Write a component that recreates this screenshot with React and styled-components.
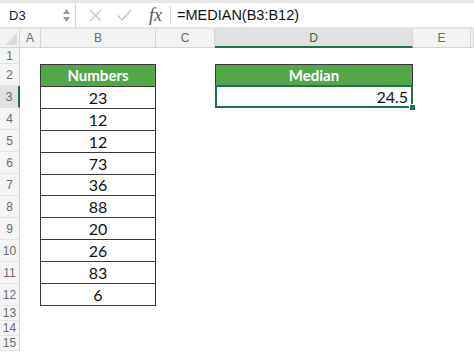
import React from "react";
import styled, { createGlobalStyle } from "styled-components";

const GlobalStyle = createGlobalStyle`
  body {
    margin: 0;
    background: #ffffff;
    font-family: "Liberation Sans", Arial, sans-serif;
  }
`;

const Page = styled.div`
  width: 474px;
  height: 353px;
  overflow: hidden;
  background: #ffffff;
  display: flex;
  flex-direction: column;
`;

const FormulaBar = styled.div`
  display: flex;
  align-items: stretch;
  height: 24px;
  border-top: 3px solid #e6e6e6;
  border-bottom: 2px solid #e6e6e6;
  background: #ffffff;
`;

const NameBox = styled.div`
  width: 76px;
  display: flex;
  align-items: center;
  justify-content: space-between;
  padding: 0 5px 0 9px;
  box-sizing: border-box;
  border-right: 1px solid #d6d6d6;
  font-size: 13px;
  color: #222;
`;

const Spinner = styled.div`
  display: flex;
  flex-direction: column;
  gap: 3px;
  color: #9a9a9a;
`;

const IconGroup = styled.div`
  display: flex;
  align-items: center;
  gap: 15px;
  padding: 0 0 0 13px;
  color: #c4c4c4;
`;

const Fx = styled.span`
  font-family: "Liberation Serif", "Times New Roman", serif;
  font-style: italic;
  font-size: 18px;
  color: #555;
  padding: 0 8px 0 2px;
  border-right: 1px solid #d6d6d6;
  line-height: 18px;
`;

const FormulaText = styled.div`
  display: flex;
  align-items: center;
  padding-left: 6px;
  font-size: 14.5px;
  color: #111;
`;

const Sheet = styled.div`
  display: grid;
  grid-template-columns: 20px 21px 115px 59px 198px 58px 1fr;
  grid-template-rows: 19px 16px repeat(11, 22px) repeat(3, 15px) 1fr;
  flex: 1;
`;

const Corner = styled.div`
  grid-row: 1;
  grid-column: 1;
  background: #f2f2f2;
  border-right: 1px solid #d4d4d4;
  border-bottom: 1px solid #d4d4d4;
  position: relative;
  &::after {
    content: "";
    position: absolute;
    right: 2px;
    bottom: 2px;
    border-left: 12px solid transparent;
    border-bottom: 12px solid #dcdcdc;
  }
`;

const ColHead = styled.div`
  grid-row: 1;
  display: flex;
  align-items: center;
  justify-content: center;
  font-size: 12px;
  color: ${(p) => (p.$active ? "#2f6b45" : "#6b6b6b")};
  background: ${(p) => (p.$active ? "#e1e1e1" : "#f2f2f2")};
  border-right: 1px solid #d4d4d4;
  border-bottom: ${(p) => (p.$active ? "2px solid #217346" : "1px solid #d4d4d4")};
`;

const RowHead = styled.div`
  grid-column: 1;
  display: flex;
  align-items: center;
  justify-content: center;
  font-size: 12px;
  color: #6b6b6b;
  background: ${(p) => (p.$active ? "#e1e1e1" : "#f4f4f4")};
  border-right: ${(p) => (p.$active ? "2px solid #217346" : "1px solid #d4d4d4")};
  border-bottom: 1px solid #e2e2e2;
`;

const DataTable = styled.div`
  grid-column: 3;
  grid-row: 3 / span 11;
  display: flex;
  flex-direction: column;
  border: 1px solid #3a3a3a;
  margin-left: -1px;
  font-family: Lato, "Open Sans", sans-serif;
`;

const HeadCell = styled.div`
  flex: 1;
  display: flex;
  align-items: center;
  justify-content: center;
  background: #52a849;
  color: #ffffff;
  font-weight: 700;
  font-size: 15px;
  border-bottom: 1px solid #3a3a3a;
`;

const ValueCell = styled.div`
  flex: 1;
  display: flex;
  align-items: center;
  justify-content: center;
  font-size: 16px;
  color: #111;
  border-bottom: 1px solid #3a3a3a;
  &:last-child {
    border-bottom: none;
  }
`;

const MedianBlock = styled.div`
  grid-column: 5;
  grid-row: 3 / span 2;
  display: flex;
  flex-direction: column;
  font-family: Lato, "Open Sans", sans-serif;
`;

const MedianHead = styled(HeadCell)`
  border: 1px solid #3a3a3a;
  border-bottom: none;
`;

const SelectedCell = styled.div`
  flex: 1;
  position: relative;
  display: flex;
  align-items: center;
  justify-content: flex-end;
  padding-right: 3px;
  font-size: 16px;
  color: #111;
  border: 2px solid #217346;
  &::after {
    content: "";
    position: absolute;
    right: -5px;
    bottom: -5px;
    width: 5px;
    height: 5px;
    background: #217346;
    border: 1px solid #ffffff;
  }
`;

const cols = [
  { label: "A", col: 2 },
  { label: "B", col: 3 },
  { label: "C", col: 4 },
  { label: "D", col: 5, active: true },
  { label: "E", col: 6 },
  { label: "", col: 7 },
];

const numbers = [23, 12, 12, 73, 36, 88, 20, 26, 83, 6];

export default function App() {
  return (
    <Page>
      <GlobalStyle />
      <FormulaBar>
        <NameBox>
          D3
          <Spinner>
            <svg width="7" height="5" viewBox="0 0 7 5"><path d="M3.5 0L7 5H0z" fill="currentColor" /></svg>
            <svg width="7" height="5" viewBox="0 0 7 5"><path d="M0 0h7L3.5 5z" fill="currentColor" /></svg>
          </Spinner>
        </NameBox>
        <IconGroup>
          <svg width="13" height="13" viewBox="0 0 13 13"><path d="M1 1l11 11M12 1L1 12" stroke="currentColor" strokeWidth="1.3" /></svg>
          <svg width="15" height="12" viewBox="0 0 15 12"><path d="M1 6.5l4 4.5L14 1" stroke="currentColor" strokeWidth="1.3" fill="none" /></svg>
          <Fx>fx</Fx>
        </IconGroup>
        <FormulaText>=MEDIAN(B3:B12)</FormulaText>
      </FormulaBar>
      <Sheet>
        <Corner />
        {cols.map((c) => (
          <ColHead key={c.col} $active={c.active} style={{ gridColumn: c.col }}>
            {c.label}
          </ColHead>
        ))}
        {Array.from({ length: 15 }, (_, i) => (
          <RowHead key={i} $active={i === 2} style={{ gridRow: i + 2 }}>
            {i + 1}
          </RowHead>
        ))}
        <DataTable>
          <HeadCell>Numbers</HeadCell>
          {numbers.map((n, i) => (
            <ValueCell key={i}>{n}</ValueCell>
          ))}
        </DataTable>
        <MedianBlock>
          <MedianHead>Median</MedianHead>
          <SelectedCell>24.5</SelectedCell>
        </MedianBlock>
      </Sheet>
    </Page>
  );
}
